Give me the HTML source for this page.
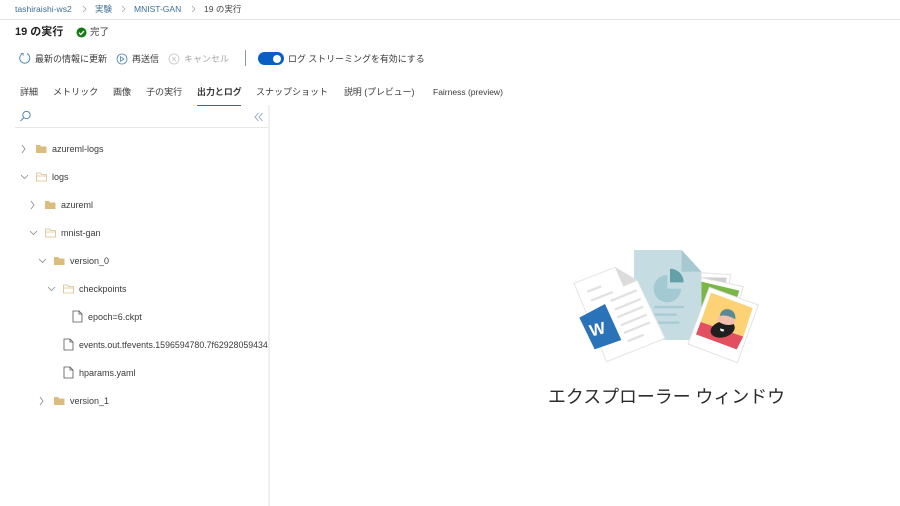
<!DOCTYPE html>
<html lang="ja"><head><meta charset="utf-8"><style>
html,body{margin:0;padding:0;background:#fff;width:900px;height:506px;overflow:hidden}
body{position:relative;font-family:"Liberation Sans","Noto Sans CJK JP",sans-serif;color:#3a3a3a}
#w{position:absolute;left:0;top:0;width:900px;height:506px;filter:blur(.3px)}
.t{position:absolute;white-space:nowrap;line-height:14px;font-size:9.5px}
.a{position:absolute}
svg{position:absolute;overflow:visible}
</style></head><body><div id="w">
<div class="t" style="left:15px;top:2px;color:#3f6f96;font-size:8.6px">tashiraishi-ws2</div>
<div class="t" style="left:95px;top:2px;color:#3f6f96;font-size:8.5px">実験</div>
<div class="t" style="left:134px;top:2px;color:#3f6f96;font-size:8.5px">MNIST-GAN</div>
<div class="t" style="left:204px;top:2px;color:#444;font-size:8.5px">19 の実行</div>
<svg style="left:0;top:0" width="240" height="20" fill="none" stroke="#a8a8a8" stroke-width=".8"><path d="M83 6l3 3-3 3M122 6l3 3-3 3M192 6l3 3-3 3"/></svg>
<div class="a" style="left:0;top:19px;width:900px;height:1px;background:#e4e4e4"></div>

<div class="t" style="left:15px;top:25px;font-size:11px;font-weight:bold;color:#222">19 の実行</div>
<svg style="left:76px;top:27px" width="11" height="11"><circle cx="5.5" cy="5.5" r="5" fill="#107c10"/><path d="M3 5.7l1.8 1.8L8 4" fill="none" stroke="#fff" stroke-width="1.3"/></svg>
<div class="t" style="left:90px;top:26px;font-size:9.5px">完了</div>

<svg style="left:19px;top:52px" width="12" height="13" fill="none" stroke="#3f7fb5" stroke-width=".9"><path d="M4 1.5A5 5 0 1 0 8 1.7"/><path d="M1.8 1.5L4.2 1.5 4.2 3.8" stroke-width=".7"/></svg>
<div class="t" style="left:35px;top:52px;font-size:9px">最新の情報に更新</div>
<svg style="left:116px;top:53px" width="12" height="12" fill="none" stroke="#4a86b8" stroke-width=".8"><circle cx="6" cy="6" r="5"/><path d="M4.5 3.7L8 6 4.5 8.3Z"/></svg>
<div class="t" style="left:132px;top:52px;font-size:9px">再送信</div>
<svg style="left:168px;top:53px" width="12" height="12" fill="none" stroke="#c4c4c4" stroke-width=".8"><circle cx="6" cy="6" r="5"/><path d="M4 4l4 4M8 4l-4 4"/></svg>
<div class="t" style="left:184px;top:52px;font-size:9px;color:#a6a6a6">キャンセル</div>
<div class="a" style="left:245px;top:50px;width:1px;height:16px;background:#8a9a94"></div>
<div class="a" style="left:258px;top:52px;width:26px;height:13px;border-radius:7px;background:#0a5fc4"></div>
<div class="a" style="left:273px;top:54.500px;width:8px;height:8px;border-radius:50%;background:#fff"></div>
<div class="t" style="left:288px;top:52px;font-size:8.95px">ログ ストリーミングを有効にする</div>

<div class="t" style="left:20px;top:85px;font-size:9.05px">詳細</div>
<div class="t" style="left:53px;top:85px;font-size:9.05px">メトリック</div>
<div class="t" style="left:113px;top:85px;font-size:9.05px">画像</div>
<div class="t" style="left:146px;top:85px;font-size:9.05px">子の実行</div>
<div class="t" style="left:197px;top:85px;font-size:8.95px;font-weight:bold">出力とログ</div>
<div class="a" style="left:197px;top:104.500px;width:44px;height:1.500px;background:#2a6f97"></div>
<div class="t" style="left:256px;top:85px;font-size:9px">スナップショット</div>
<div class="t" style="left:344px;top:85px;font-size:8.9px">説明 (プレビュー)</div>
<div class="t" style="left:433px;top:85px;font-size:8.5px">Fairness (preview)</div>

<svg style="left:19px;top:110px" width="13" height="13" fill="none" stroke="#3f7fb5" stroke-width=".9"><circle cx="7.500" cy="5" r="3.700"/><path d="M4.800 7.700L1.500 11"/></svg>
<svg style="left:254px;top:112px" width="10" height="10" fill="none" stroke="#7a9dbd" stroke-width=".8"><path d="M4.500 1L1 5l3.500 4M8.500 1L5 5l3.500 4"/></svg>
<div class="a" style="left:15px;top:127px;width:254px;height:1px;background:#e6e6e6"></div>
<div class="a" style="left:268px;top:105px;width:1.500px;height:401px;background:#efefef"></div>

<svg style="left:0;top:130px" width="120" height="290" fill="none" stroke="#8a8a8a" stroke-width=".8">
<path d="M22 15l3 4-3 4"/>
<path d="M21 45l3.500 3.500L28 45"/>
<path d="M31 71l3 4-3 4"/>
<path d="M30 101l3.500 3.500L37 101"/>
<path d="M39 129l3.500 3.500L46 129"/>
<path d="M48 157l3.500 3.500L55 157"/>
<path d="M40 267l3 4-3 4"/>
<g fill="#dcbb7e" stroke="none">
<path d="M36 15h4l1 1.500h5.500V23H36z"/>
<path d="M45 71h4l1 1.500h5.500V79H45z"/>
<path d="M54 127h4l1 1.500h5.500V135H54z"/>
<path d="M54 267h4l1 1.500h5.500V275H54z"/>
</g>
<g stroke="#d9bd8a" stroke-width=".8">
<path d="M36.500 45v-2h4l1 1.500h5v6.500h-10zM36.500 46h10"/>
<path d="M45.500 101v-2h4l1 1.500h5v6.500h-10zM45.500 102h10"/>
<path d="M63.500 157v-2h4l1 1.500h5v6.500h-10zM63.500 158h10"/>
</g>
<g stroke="#555" stroke-width=".8">
<path d="M73 181h6l3 3v8h-9zM79 181v3h3"/>
<path d="M64 209h6l3 3v8h-9zM70 209v3h3"/>
<path d="M64 237h6l3 3v8h-9zM70 237v3h3"/>
</g>
</svg>
<div class="t" style="left:52px;top:142px;font-size:9px">azureml-logs</div>
<div class="t" style="left:52px;top:170px;font-size:9px">logs</div>
<div class="t" style="left:61px;top:198px;font-size:9px">azureml</div>
<div class="t" style="left:61px;top:226px;font-size:9px">mnist-gan</div>
<div class="t" style="left:70px;top:254px;font-size:9px">version_0</div>
<div class="t" style="left:79px;top:282px;font-size:9px">checkpoints</div>
<div class="t" style="left:88px;top:310px;font-size:9px">epoch=6.ckpt</div>
<div class="a" style="left:79px;top:338px;width:189px;height:14px;overflow:hidden"><div class="t" style="left:0;top:0;font-size:8.8px">events.out.tfevents.1596594780.7f629280594340</div></div>
<div class="t" style="left:79px;top:366px;font-size:9px">hparams.yaml</div>
<div class="t" style="left:70px;top:394px;font-size:9px">version_1</div>

<svg style="left:560px;top:240px" width="210" height="130" viewBox="0 0 630 390">
<path d="M420 98L512 104 506 140 420 140Z" fill="#fff" stroke="#e2e2e2" stroke-width="3"/>
<path d="M424 112L500 113 498 130 424 130Z" fill="#cfcfcf"/>
<path d="M420 112L550 140 525 220 420 220Z" fill="#fff" stroke="#e2e2e2" stroke-width="3"/>
<path d="M424 125L538 152 520 210 424 210Z" fill="#7ab648"/>
<path d="M222 30H365L424 95V300H222Z" fill="#c5dce2"/>
<path d="M365 30L424 95H365Z" fill="#a5c8d1"/>
<path d="M322 105A41 41 0 1 0 363 146H322Z" fill="#a3c9d2"/>
<path d="M330 86A41 41 0 0 1 371 127H330Z" fill="#63a0a8"/>
<path d="M282 201h90M282 224h68M282 248h76" stroke="#a9cbd4" stroke-width="7"/>
<path d="M42 130L165 82 232 122 315 295 140 365Z" fill="#fff" stroke="#e4e4e4" stroke-width="3"/>
<path d="M165 82L232 122 190 140Z" fill="#dcdcdc"/>
<path d="M82 155l42-16M93 182l65-26M152 183l78-32M164 209l78-32M172 232l78-32M182 256l78-32M192 279l78-32M203 304l48-20" stroke="#e2e2e2" stroke-width="7"/>
<path d="M58 233L135 192 184 300 104 328Z" fill="#2b73b8"/>
<text x="88" y="284" font-family="Liberation Sans" font-weight="bold" font-size="50" fill="#fff" transform="rotate(-14 115 265)">W</text>
<path d="M448 142L595 195 532 368 384 312Z" fill="#fff" stroke="#e2e2e2" stroke-width="3"/>
<path d="M453 158L578 204 550 290 422 246Z" fill="#fdd277"/>
<path d="M422 246L550 290 530 328 408 283Z" fill="#e2505f"/>
<ellipse cx="488" cy="268" rx="37" ry="24" fill="#1f1f1f" transform="rotate(-15 488 268)"/>
<ellipse cx="498" cy="241" rx="27" ry="13" fill="#f3bfb0" transform="rotate(12 498 241)"/>
<path d="M479 228Q484 204 508 208 528 214 526 238Q500 222 479 228Z" fill="#5a8a96"/>
<path d="M480 265l13 4-3 6-8-2z" fill="#fff"/>
</svg>
<div class="t" style="left:548px;top:384px;font-size:17.9px;line-height:26px;color:#2b2b2b">エクスプローラー ウィンドウ</div>
</div></body></html>
